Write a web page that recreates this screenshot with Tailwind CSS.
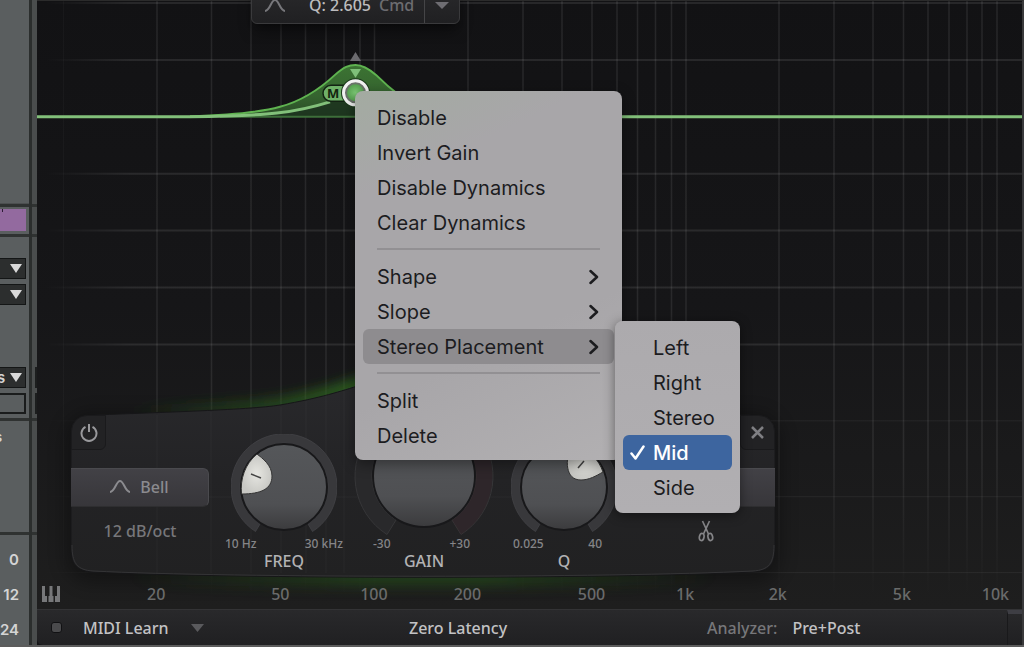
<!DOCTYPE html>
<html lang="en">
  <head>
    <meta charset="UTF-8" />
    <meta name="viewport" content="width=device-width, initial-scale=1.0" />
    <title>Equalizer</title>
    <script src="https://cdn.jsdelivr.net/npm/@tailwindcss/browser@4"></script>
  </head>
  <body
    class="flex h-screen overflow-hidden border-b-2 border-[#5c5c5c] bg-[#141416] font-['Noto_Sans','Open_Sans',sans-serif] font-medium"
  >
    <!-- Host mixer strip -->
    <aside
      class="flex w-[37px] shrink-0 bg-[#4a4d4d] font-['Inter',sans-serif] text-[15px] leading-none font-semibold text-[#d4d4d4]"
    >
      <div class="flex w-[29px] flex-col bg-[#5a5e5f]">
        <div class="h-[204px] border-b border-[#4c4f50]"></div>
        <div class="h-[3px] bg-[#2f3231]"></div>
        <div class="mt-[2px] mr-[3px] flex h-[22px] justify-start bg-[#936a9f]">
          <span class="ml-[2px] h-[3px] w-px bg-[#2c1a33]"></span>
        </div>
        <div class="mt-[3px] h-[3px] bg-[#2f3231]"></div>
        <button
          type="button"
          aria-label="Input type"
          class="mt-[21px] mr-[3px] flex h-[21px] items-center justify-end border-y border-r border-[#141616] bg-[#2c2e2e] pr-[3px]"
        >
          <svg class="h-[9px] w-[12px]" viewBox="0 0 12 9"><path d="M0 0H12L6 9Z" fill="#d9d9d9" /></svg>
        </button>
        <button
          type="button"
          aria-label="Input channel"
          class="mt-[5px] mr-[3px] flex h-[21px] items-center justify-end border-y border-r border-[#141616] bg-[#2c2e2e] pr-[3px]"
        >
          <svg class="h-[9px] w-[12px]" viewBox="0 0 12 9"><path d="M0 0H12L6 9Z" fill="#d9d9d9" /></svg>
        </button>
        <button
          type="button"
          class="mt-[62px] mr-[3px] flex h-[21px] items-center justify-between border-y border-r border-[#141616] bg-[#2c2e2e] pr-[3px]"
        >
          <span class="-ml-[3px]">s</span>
          <svg class="h-[9px] w-[12px]" viewBox="0 0 12 9"><path d="M0 0H12L6 9Z" fill="#d9d9d9" /></svg>
        </button>
        <div class="mt-[5px] mr-[3px] h-[21px] border-y-2 border-r-2 border-[#1a1c1c]"></div>
        <div class="mt-[4px] h-[3px] bg-[#2f3231]"></div>
        <div class="h-[111px] pt-[8px]"><span class="-ml-[5px] text-[13px]">s</span></div>
        <div class="h-[3px] bg-[#2f3231]"></div>
        <div class="flex flex-col items-end gap-[20px] pt-[17px] pr-[10px]">
          <span>0</span>
          <span>12</span>
          <span>24</span>
        </div>
      </div>
      <div class="w-[3px] bg-[#2b2e2d]"></div>
      <div class="flex w-[5px] flex-col">
        <div class="h-[204px]"></div>
        <div class="h-[3px] bg-[#2f3231]"></div>
        <div class="mt-[27px] h-[3px] bg-[#2f3231]"></div>
        <div class="mt-[130px] ml-[3px] h-[21px] bg-[#1c1e1e]"></div>
        <div class="mt-[5px] ml-[3px] h-[21px] bg-[#1c1e1e]"></div>
        <div class="mt-[4px] h-[3px] bg-[#2f3231]"></div>
        <div class="mt-[111px] h-[3px] bg-[#2f3231]"></div>
      </div>
    </aside>

    <main class="flex min-w-0 flex-1 flex-col border-t border-r-2 border-t-[#2b2b2b] border-r-[#39393b]">
      <!-- Spectrum display -->
      <section class="relative min-h-0 flex-1 bg-linear-to-b from-[#121214] via-[#161618] to-[#1e1e1e]">
        <svg
          class="absolute inset-0 h-full w-full"
          viewBox="37 1 985 609"
          preserveAspectRatio="none"
          fill="none"
        >
          <defs>
            <linearGradient id="fadeX" gradientUnits="userSpaceOnUse" x1="45" y1="0" x2="130" y2="0">
              <stop offset="0" stop-color="#fff" stop-opacity="0" />
              <stop offset="1" stop-color="#fff" stop-opacity=".09" />
            </linearGradient>
            <linearGradient id="fadeY" gradientUnits="userSpaceOnUse" x1="0" y1="0" x2="0" y2="610">
              <stop offset="0" stop-color="#fff" stop-opacity=".085" />
              <stop offset=".75" stop-color="#fff" stop-opacity=".08" />
              <stop offset=".98" stop-color="#fff" stop-opacity="0" />
            </linearGradient>
            <linearGradient id="band" x1="0" y1="0" x2="0" y2="1">
              <stop offset="0" stop-color="#3c7333" />
              <stop offset=".6" stop-color="#35642f" />
              <stop offset="1" stop-color="#294a26" />
            </linearGradient>
            <radialGradient id="node">
              <stop offset="0" stop-color="#80cd78" />
              <stop offset="1" stop-color="#55a14f" />
            </radialGradient>
          </defs>
          <!-- dB lines -->
          <path
            stroke="url(#fadeX)"
            stroke-width="2"
            d="M37 3H1022M37 60H1022M37 174H1022M37 231H1022M37 288H1022M37 345H1022"
          />
          <path stroke="url(#fadeX)" stroke-width="1" opacity=".6" d="M37 421.500H1022M37 497.500H1022M37 573.500H1022" />
          <!-- frequency lines, one decade is 311px -->
          <path stroke="url(#fadeY)" stroke-width="1" opacity=".3" d="M63.500 1V570" />
          <path
            stroke="url(#fadeY)"
            stroke-width="1.500"
            d="M157 1V610M211.500 1V610M251 1V610M281 1V610M305.500 1V610M326 1V610M344 1V610M360 1V610M374.500 1V610M468 1V610M523 1V610M562 1V610M592 1V610M617 1V610M637.500 1V610M655.500 1V610M671.500 1V610M686 1V610M779 1V610M834 1V610M873 1V610M903.500 1V610M928 1V610M949 1V610M967 1V610M982 1V610M997 1V610"
          />
          <!-- band curve -->
          <path
            d="M190 117C240 115 262 112 280 107C302 101 320 89 335 75C344 67 349 65 355.500 65C362 65 368 68 376 75C384 83 392 90 400 96V117Z"
            fill="url(#band)"
          />
          <path d="M230 117C270 115 298 112 330 102L355 96L400 110V117Z" fill="#1c331e" opacity=".85" />
          <path d="M220 117H400" stroke="#3d6e3a" stroke-width="2" />
          <path
            d="M190 116.500C240 115 262 112 280 107C302 101 320 89 335 75C344 67 349 65 355.500 65C362 65 368 68 376 75C384 83 392 90 400 96"
            stroke="#5fb350"
            stroke-width="2"
          />
          <path d="M37 117H190C270 116 295 113 330 102M600 117H1022" stroke="#82c07a" stroke-width="3" />
          <!-- band node -->
          <path d="M350 61H361L355.500 52Z" fill="#6b6a6e" />
          <path d="M350 69H361L355.500 78Z" fill="#7fc079" />
          <rect x="323" y="85.500" width="34" height="16" rx="8" fill="#6fb168" stroke="#132313" stroke-width="1.500" />
          <circle cx="355.500" cy="93" r="14.500" fill="#1b3a1b" />
          <circle cx="355.500" cy="93" r="12" fill="#6b746b" stroke="#f2f2f2" stroke-width="3" />
          <circle cx="355.500" cy="93" r="8.500" fill="url(#node)" />
        </svg>
        <span class="absolute top-[85px] left-[290px] text-[13px] leading-[15px] font-bold text-[#14250f]">M</span>

        <!-- Band readout -->
        <div
          class="absolute top-[-15px] left-[214px] flex h-[38px] w-[209px] rounded-[6px] border border-[#3a3a3c] bg-linear-to-b from-[#2a2a2c] to-[#202022] shadow-lg shadow-black/40 [clip-path:inset(14px_-20px_-20px_-20px)]"
        >
          <div class="flex flex-1 items-center gap-[24px] pl-[13px]">
            <svg class="h-[13px] w-[20px] shrink-0" viewBox="0 0 20 13" fill="none" stroke="#77777b" stroke-width="2">
              <path d="M0 12C5 12 6 1 10 1S15 12 20 12" />
            </svg>
            <p class="flex gap-[8px] text-[16px] leading-[36px] whitespace-nowrap text-[#bcbcbe]">
              Q: 2.605 <span class="text-[#6c6c70]">Cmd</span>
            </p>
          </div>
          <button
            type="button"
            aria-label="More"
            class="flex w-[35px] items-center justify-center border-l border-[#454547]"
          >
            <svg class="h-[7px] w-[14px]" viewBox="0 0 14 7"><path d="M0 0H14L7 7Z" fill="#6e6d72" /></svg>
          </button>
        </div>

        <!-- Band controls -->
        <div class="absolute top-[414px] left-[34px] flex h-[158px] w-[704px]">
          <svg class="absolute inset-0 h-full w-full overflow-visible" viewBox="0 0 704 158" fill="none">
            <defs>
              <linearGradient id="panel" x1="0" y1="0" x2="0" y2="1">
                <stop offset="0" stop-color="#29292c" />
                <stop offset=".5" stop-color="#232325" />
                <stop offset="1" stop-color="#212122" />
              </linearGradient>
              <linearGradient id="glow" gradientUnits="userSpaceOnUse" x1="60" y1="0" x2="644" y2="0">
                <stop offset="0" stop-color="#2f6a1f" stop-opacity="0" />
                <stop offset=".4" stop-color="#2f6a1f" stop-opacity=".85" />
                <stop offset=".6" stop-color="#2f6a1f" stop-opacity=".85" />
                <stop offset="1" stop-color="#2f6a1f" stop-opacity="0" />
              </linearGradient>
              <filter id="soft" filterUnits="userSpaceOnUse" x="-60" y="-110" width="824" height="330">
                <feGaussianBlur stdDeviation="9" />
              </filter>
              <filter id="soft2" filterUnits="userSpaceOnUse" x="-60" y="-110" width="824" height="330">
                <feGaussianBlur stdDeviation="6" />
              </filter>
              <linearGradient id="knob" x1="0" y1="0" x2="0" y2="1">
                <stop offset="0" stop-color="#55575a" />
                <stop offset=".7" stop-color="#4f5053" />
                <stop offset="1" stop-color="#3b3b3d" />
              </linearGradient>
              <radialGradient id="cap">
                <stop offset="0" stop-color="#e6e6e1" />
                <stop offset="1" stop-color="#c8c8c4" />
              </radialGradient>
            </defs>
            <rect x="-6" y="-2" width="716" height="170" rx="26" fill="#000" opacity=".3" filter="url(#soft)" />
            <path
              d="M60 -1C140 -5 180 -6 209 -10C250 -17 270 -24 290 -30C320 -38 384 -38 414 -30C434 -24 454 -17 495 -10C524 -6 564 -5 644 -1"
              stroke="url(#glow)"
              stroke-width="16"
              filter="url(#soft2)"
            />
            <path d="M60 158C160 163 540 163 644 158" stroke="url(#glow)" stroke-width="20" opacity=".5" filter="url(#soft2)" />
            <path
              d="M0 24C0 8 6 1 24 0C70 -2 180 -5 209 -10C250 -17 270 -24 290 -30C320 -38 384 -38 414 -30C434 -24 454 -17 495 -10C524 -5 634 -2 680 0C698 1 704 8 704 24V134C704 150 698 156 682 157C540 164 160 164 22 157C6 156 0 150 0 134Z"
              fill="url(#panel)"
              stroke="#161618"
            />
            <path d="M1 130C1 148 6 155 22 156C160 163 540 163 682 156C698 155 703 148 703 130" stroke="#343436" />
            <path stroke="#fff" stroke-opacity=".035" d="M86 0V158M140 -3V158M180 -6V158M210 -8V158M235 -14V158M255 -20V158M273 -24V158M1 82H703" />
          </svg>

          <div class="relative flex w-[138px] shrink-0 flex-col items-start">
            <button
              type="button"
              aria-label="Bypass band"
              class="flex h-[35px] w-[35px] items-center justify-center rounded-tl-[16px] rounded-br-[6px] border border-[#1a1a1c] bg-[#222224]"
            >
              <svg class="h-[18px] w-[18px]" viewBox="0 0 18 18" fill="none" stroke="#99999c" stroke-width="2">
                <path d="M5.500 2.800A7.500 7.500 0 1 0 12.500 2.800M9 0V8" />
              </svg>
            </button>
            <button
              type="button"
              class="mt-[18px] flex h-[39px] w-full items-center justify-center gap-[10px] rounded-r-[6px] border border-l-0 border-[#4a4a4e] border-b-[#2e2e30] bg-linear-to-b from-[#424146] to-[#37363a] pb-[2px] text-[16px] text-[#8b8b8f]"
            >
              <svg class="h-[13px] w-[20px]" viewBox="0 0 20 13" fill="none" stroke="#8b8b8f" stroke-width="2">
                <path d="M0 12C5 12 6 1 10 1S15 12 20 12" />
              </svg>
              Bell
            </button>
            <button type="button" class="mt-[12px] w-full text-center text-[16px] leading-6 text-[#77777a]">12 dB/oct</button>
          </div>

          <div class="relative ml-[5px] flex shrink-0 items-end pb-[3px] text-[12px] text-[#858588]">
            <div class="flex w-[140px] flex-col items-center">
              <div class="relative">
                <svg class="h-[102px] w-[106px]" viewBox="0 0 106 102" fill="none">
                  <path
                    d="M24.500 97.500A53 53 0 1 1 81.500 97.500L77 90A44 44 0 1 0 29 90Z"
                    fill="#38383b"
                    stroke="#434346"
                    stroke-width=".8"
                  />
                  <circle cx="53" cy="53" r="43" fill="url(#knob)" stroke="#18181a" stroke-width="2" />
                  <path
                    d="M26 20C31 24 41 31 41 42C41 55 30 60 10.500 60C9 45 14 30 26 20Z"
                    fill="url(#cap)"
                    stroke="#333"
                    stroke-width="1"
                  />
                  <path d="M20 40L30 44" stroke="#444" stroke-width="1.500" />
                </svg>
                <input id="freq" type="range" class="absolute inset-0 h-full w-full opacity-0" />
              </div>
              <div class="flex w-full justify-between px-[11px] leading-4">
                <span>10 Hz</span>
                <span>30 kHz</span>
              </div>
              <label for="freq" class="text-[16px] leading-[18px] text-[#b2b2b4]">FREQ</label>
            </div>
            <div class="flex w-[140px] flex-col items-center">
              <div class="relative">
                <svg class="h-[129px] w-[140px]" viewBox="0 0 140 129" fill="none">
                  <path
                    d="M33 127.500A69 69 0 1 1 107 127.500L98 113A52 52 0 1 0 42 113Z"
                    fill="#29292b"
                    stroke="#363638"
                  />
                  <path d="M107 127.500A69 69 0 0 0 133 43L118 50A52 52 0 0 1 98 113Z" fill="#3a2327" opacity=".35" />
                  <circle cx="70" cy="69" r="51" fill="url(#knob)" stroke="#18181a" stroke-width="2" />
                </svg>
                <input id="gain" type="range" class="absolute inset-0 h-full w-full opacity-0" />
              </div>
              <div class="flex w-full justify-between pr-[24px] pl-[19px] leading-4">
                <span>-30</span>
                <span>+30</span>
              </div>
              <label for="gain" class="text-[16px] leading-[18px] text-[#b2b2b4]">GAIN</label>
            </div>
            <div class="flex w-[140px] flex-col items-center">
              <div class="relative">
                <svg class="h-[102px] w-[106px]" viewBox="0 0 106 102" fill="none">
                  <path
                    d="M24.500 97.500A53 53 0 1 1 81.500 97.500L77 90A44 44 0 1 0 29 90Z"
                    fill="#38383b"
                    stroke="#434346"
                    stroke-width=".8"
                  />
                  <circle cx="53" cy="53" r="43" fill="url(#knob)" stroke="#18181a" stroke-width="2" />
                  <path
                    d="M60 11C54 26 54 46 70 46C78 46 85 42 92 38C88 26 78 14 60 11Z"
                    fill="url(#cap)"
                    stroke="#333"
                    stroke-width="1"
                  />
                  <path d="M67 34L73 27" stroke="#444" stroke-width="1.500" />
                </svg>
                <input id="q" type="range" class="absolute inset-0 h-full w-full opacity-0" />
              </div>
              <div class="flex w-full justify-between pr-[32px] pl-[19px] leading-4">
                <span>0.025</span>
                <span>40</span>
              </div>
              <label for="q" class="text-[16px] leading-[18px] text-[#b2b2b4]">Q</label>
            </div>
          </div>

          <div class="relative ml-auto flex w-[138px] shrink-0 flex-col items-end">
            <button
              type="button"
              aria-label="Close"
              class="flex h-[35px] w-[35px] items-center justify-center rounded-tr-[16px] rounded-bl-[6px] border border-[#1a1a1c] bg-[#222224]"
            >
              <svg class="h-[13px] w-[13px]" viewBox="0 0 13 13" stroke="#7f7f83" stroke-width="2.500">
                <path d="M1 1L12 12M12 1L1 12" />
              </svg>
            </button>
            <div class="mt-[18px] h-[39px] w-full rounded-l-[6px] border border-r-0 border-[#4a4a4e] border-b-[#2e2e30] bg-linear-to-b from-[#424146] to-[#37363a]"></div>
            <button type="button" aria-label="Split band" class="mt-[13px] flex w-full justify-center">
              <svg class="h-[22px] w-[16px]" viewBox="0 0 16 22" fill="none" stroke="#858588" stroke-width="1.700">
                <path d="M4.500 1L10.500 14M11.500 1L5.500 14" />
                <ellipse cx="3.700" cy="17" rx="2.300" ry="3.600" transform="rotate(12 3.700 17)" />
                <ellipse cx="12.300" cy="17" rx="2.300" ry="3.600" transform="rotate(-12 12.300 17)" />
              </svg>
            </button>
          </div>
        </div>

        <!-- Frequency scale -->
        <div class="absolute inset-x-0 bottom-[4px] h-[22px] text-[16px] leading-[22px] text-[#6a6b6b]">
          <svg class="absolute top-[3px] left-[5px] h-[16px] w-[18px]" viewBox="0 0 18 16" fill="#77787a">
            <path d="M0 0H3V10H5V16H0ZM6.500 10H7.500V0H10.500V10H11.500V16H6.500ZM15 0H18V16H13V10H15Z" />
          </svg>
          <span class="absolute left-[12.100%] -translate-x-1/2">20</span>
          <span class="absolute left-[24.700%] -translate-x-1/2">50</span>
          <span class="absolute left-[34.200%] -translate-x-1/2">100</span>
          <span class="absolute left-[43.700%] -translate-x-1/2">200</span>
          <span class="absolute left-[56.300%] -translate-x-1/2">500</span>
          <span class="absolute left-[65.800%] -translate-x-1/2">1k</span>
          <span class="absolute left-[75.200%] -translate-x-1/2">2k</span>
          <span class="absolute left-[87.800%] -translate-x-1/2">5k</span>
          <span class="absolute left-[97.300%] -translate-x-1/2">10k</span>
        </div>

        <!-- Band context menu -->
        <div
          role="menu"
          class="absolute top-[90px] left-[318px] w-[267px] rounded-[8px] bg-[#a9a7aa] bg-[linear-gradient(155deg,#a3aba1_0%,#a8a6a9_22%,#a8a6a9_65%,#b2b0b2_100%)] px-[8px] pt-[9px] pb-[7px] font-['Inter',sans-serif] text-[20px] font-normal text-[#1c1c1f] shadow-[0_4px_14px_rgba(0,0,0,0.4)]"
        >
          <button type="button" role="menuitem" class="flex h-[35px] w-full items-center px-[14px]">Disable</button>
          <button type="button" role="menuitem" class="flex h-[35px] w-full items-center px-[14px]">Invert Gain</button>
          <button type="button" role="menuitem" class="flex h-[35px] w-full items-center px-[14px]">Disable Dynamics</button>
          <button type="button" role="menuitem" class="flex h-[35px] w-full items-center px-[14px]">Clear Dynamics</button>
          <hr class="mx-[14px] mt-[8px] mb-[9px] border-t-2 border-[#929093]" />
          <button type="button" role="menuitem" class="flex h-[35px] w-full items-center justify-between pr-[15px] pl-[14px]">
            Shape
            <svg class="h-[16px] w-[10px]" viewBox="0 0 10 16" fill="none" stroke="currentColor" stroke-width="2.500" stroke-linecap="round" stroke-linejoin="round">
              <path d="M1.500 2L8 8L1.500 14" />
            </svg>
          </button>
          <button type="button" role="menuitem" class="flex h-[35px] w-full items-center justify-between pr-[15px] pl-[14px]">
            Slope
            <svg class="h-[16px] w-[10px]" viewBox="0 0 10 16" fill="none" stroke="currentColor" stroke-width="2.500" stroke-linecap="round" stroke-linejoin="round">
              <path d="M1.500 2L8 8L1.500 14" />
            </svg>
          </button>
          <button type="button" role="menuitem" class="flex h-[35px] w-full items-center justify-between rounded-[6px] bg-[#8e8c8f] pr-[15px] pl-[14px]">
            Stereo Placement
            <svg class="h-[16px] w-[10px]" viewBox="0 0 10 16" fill="none" stroke="currentColor" stroke-width="2.500" stroke-linecap="round" stroke-linejoin="round">
              <path d="M1.500 2L8 8L1.500 14" />
            </svg>
          </button>
          <hr class="mx-[14px] mt-[8px] mb-[9px] border-t-2 border-[#929093]" />
          <button type="button" role="menuitem" class="flex h-[35px] w-full items-center px-[14px]">Split</button>
          <button type="button" role="menuitem" class="flex h-[35px] w-full items-center px-[14px]">Delete</button>
        </div>

        <!-- Stereo placement submenu -->
        <div
          role="menu"
          class="absolute top-[320px] left-[578px] w-[125px] rounded-[8px] bg-linear-to-b from-[#acaaad] to-[#b1afb2] px-[8px] pt-[9px] pb-[8px] font-['Inter',sans-serif] text-[20px] font-normal text-[#1c1c1f] shadow-[0_2px_12px_rgba(0,0,0,0.45)]"
        >
          <button type="button" role="menuitem" class="flex h-[35px] w-full items-center pl-[30px]">Left</button>
          <button type="button" role="menuitem" class="flex h-[35px] w-full items-center pl-[30px]">Right</button>
          <button type="button" role="menuitem" class="flex h-[35px] w-full items-center pl-[30px]">Stereo</button>
          <button type="button" role="menuitem" class="flex h-[35px] w-full items-center gap-[8px] rounded-[6px] bg-[#3d659f] pl-[7px] font-medium text-white">
            <svg class="h-[15px] w-[15px]" viewBox="0 0 15 15" fill="none" stroke="currentColor" stroke-width="2.500" stroke-linecap="round" stroke-linejoin="round">
              <path d="M1.500 8.500L5.500 13.500L13.500 1.500" />
            </svg>
            Mid
          </button>
          <button type="button" role="menuitem" class="flex h-[35px] w-full items-center pl-[30px]">Side</button>
        </div>
      </section>

      <!-- Status bar -->
      <footer
        class="grid h-[36px] shrink-0 grid-cols-[372fr_298fr_315fr] items-center rounded-bl-[6px] border-t border-[#333335] bg-linear-to-b from-[#29292b] to-[#202022] text-[16px] text-[#c2c2c4]"
      >
        <div class="flex items-center pl-[14px]">
          <span class="h-[11px] w-[11px] rounded-[3px] border border-[#111113] bg-[#4a4a4c]"></span>
          <button type="button" class="ml-[21px] flex items-center gap-[22px]">
            MIDI Learn
            <svg class="h-[8px] w-[13px]" viewBox="0 0 13 8"><path d="M0 0H13L6.500 8Z" fill="#5a5a5d" /></svg>
          </button>
        </div>
        <button type="button" class="text-left">Zero Latency</button>
        <div class="flex h-full items-center">
          <span class="text-[#77777a]">Analyzer:</span>
          <button type="button" class="ml-[15px]">Pre+Post</button>
          <div class="ml-auto h-full w-[15px] border-t-4 border-l border-t-[#3e3e44] border-l-[#19191b]"></div>
        </div>
      </footer>
    </main>
  </body>
</html>
